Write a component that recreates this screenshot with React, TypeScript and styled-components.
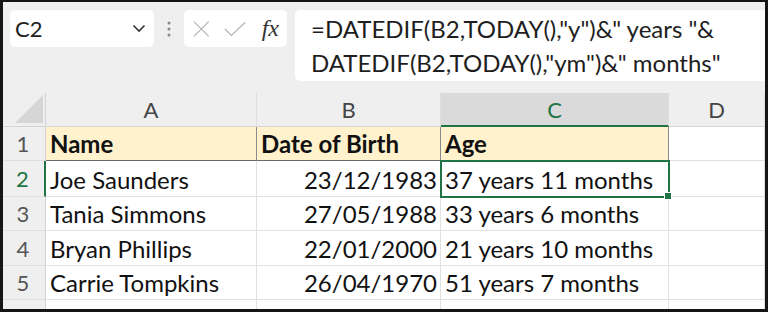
import React from "react";
import styled, { createGlobalStyle, css } from "styled-components";

const GREEN = "#217346";

const GlobalStyle = createGlobalStyle`
  html, body {
    margin: 0;
    padding: 0;
    background: #ffffff;
  }
  * {
    box-sizing: border-box;
  }
`;

const Frame = styled.div`
  width: 768px;
  height: 312px;
  border: 3px solid #151515;
  border-top-width: 2px;
  overflow: hidden;
  background: #efefef;
  font-family: Lato, "Liberation Sans", sans-serif;
  display: flex;
  flex-direction: column;
`;

const Toolbar = styled.div`
  display: flex;
  align-items: flex-start;
  height: 91px;
  padding: 8px 0 0 7px;
  flex-shrink: 0;
`;

const Box = styled.div`
  background: #ffffff;
  border-radius: 5px;
  height: 37px;
  display: flex;
  align-items: center;
`;

const NameBox = styled(Box)`
  width: 144px;
  padding: 0 8px 0 5px;
  justify-content: space-between;
  font-size: 22px;
  color: #222;
`;

const Dots = styled.div`
  width: 30px;
  height: 37px;
  display: flex;
  align-items: center;
  justify-content: center;
`;

const FxBox = styled(Box)`
  width: 103px;
  padding: 0 8px 0 9px;
  gap: 14px;
`;

const Fx = styled.span`
  font-family: "Liberation Serif", serif;
  font-style: italic;
  font-size: 24px;
  color: #333;
  margin-left: 2px;
`;

const FormulaBox = styled.div`
  flex: 1;
  margin-left: 8px;
  margin-right: -12px;
  height: 71px;
  background: #ffffff;
  border-radius: 5px;
  padding: 2px 0 0 16px;
  font-size: 24px;
  line-height: 34px;
  color: #1e1e1e;
  white-space: pre;
`;

const Grid = styled.div`
  display: grid;
  grid-template-columns: 43px 211px 184px 228px 96px;
  grid-template-rows: 34px 34px 36px 34px 35px 34px 20px;
  background: #ffffff;
`;

const ColHead = styled.div<{ $active?: boolean }>`
  display: flex;
  align-items: center;
  justify-content: center;
  background: #efefef;
  border-bottom: 1px solid #d4d4d4;
  border-right: 1px solid #dedede;
  font-size: 22px;
  color: #444;
  ${({ $active }) =>
    $active &&
    css`
      background: #dadada;
      color: ${GREEN};
      border-bottom: 2px solid ${GREEN};
    `}
`;

const Corner = styled.div`
  background: #efefef;
  border-bottom: 1px solid #d4d4d4;
  border-right: 1px solid #d4d4d4;
  display: flex;
  align-items: flex-end;
  justify-content: flex-end;
  padding: 0 2px 3px 0;
`;

const RowHead = styled.div<{ $active?: boolean }>`
  display: flex;
  align-items: center;
  justify-content: center;
  background: #efefef;
  border-bottom: 1px solid #dedede;
  border-right: 1px solid #d4d4d4;
  font-size: 22px;
  color: #555;
  padding-right: 2px;
  ${({ $active }) =>
    $active &&
    css`
      color: ${GREEN};
      border-right: 2px solid ${GREEN};
    `}
`;

const Cell = styled.div<{ $head?: boolean; $right?: boolean; $selected?: boolean }>`
  position: relative;
  display: flex;
  align-items: flex-end;
  justify-content: ${({ $right }) => ($right ? "flex-end" : "flex-start")};
  padding: 0 3px 1px 4px;
  border-right: 1px solid #e1e1e1;
  border-bottom: 1px solid #e1e1e1;
  font-size: 24px;
  line-height: 30px;
  color: #111;
  white-space: nowrap;
  ${({ $head }) =>
    $head &&
    css`
      background: #fff2cc;
      font-weight: 700;
      border-right-color: #8a8a8a;
      border-bottom-color: #6a6a6a;
    `}
  ${({ $selected }) =>
    $selected &&
    css`
      outline: 2px solid ${GREEN};
      outline-offset: -1px;
      z-index: 1;
    `}
`;

const Handle = styled.span`
  position: absolute;
  right: -4px;
  bottom: -4px;
  width: 6px;
  height: 6px;
  background: ${GREEN};
  border: 1px solid #fff;
  box-sizing: content-box;
`;

const rows = [
  { name: "Joe Saunders", dob: "23/12/1983", age: "37 years 11 months" },
  { name: "Tania Simmons", dob: "27/05/1988", age: "33 years 6 months" },
  { name: "Bryan Phillips", dob: "22/01/2000", age: "21 years 10 months" },
  { name: "Carrie Tompkins", dob: "26/04/1970", age: "51 years 7 months" },
];

export default function App() {
  return (
    <>
      <GlobalStyle />
      <Frame>
        <Toolbar>
          <NameBox>
            <span>C2</span>
            <svg width="14" height="9" viewBox="0 0 14 9">
              <path d="M1.5 1.5 L7 7 L12.5 1.5" fill="none" stroke="#333" strokeWidth="1.6" />
            </svg>
          </NameBox>
          <Dots>
            <svg width="4" height="16" viewBox="0 0 4 16">
              <circle cx="2" cy="2" r="1.5" fill="#888" />
              <circle cx="2" cy="8" r="1.5" fill="#888" />
              <circle cx="2" cy="14" r="1.5" fill="#888" />
            </svg>
          </Dots>
          <FxBox>
            <svg width="18" height="18" viewBox="0 0 18 18">
              <path d="M1 1 L17 17 M17 1 L1 17" stroke="#b4b4b4" strokeWidth="1.3" fill="none" />
            </svg>
            <svg width="24" height="16" viewBox="0 0 24 16">
              <path d="M1 8 L8 15 L23 1" stroke="#b4b4b4" strokeWidth="1.3" fill="none" />
            </svg>
            <Fx>fx</Fx>
          </FxBox>
          <FormulaBox>
            {'=DATEDIF(B2,TODAY(),"y")&" years "&\nDATEDIF(B2,TODAY(),"ym")&" months"'}
          </FormulaBox>
        </Toolbar>
        <Grid>
          <Corner>
            <svg width="28" height="28" viewBox="0 0 28 28">
              <path d="M28 0 L28 28 L0 28 Z" fill="#d6d6d6" />
            </svg>
          </Corner>
          <ColHead>A</ColHead>
          <ColHead>B</ColHead>
          <ColHead $active>C</ColHead>
          <ColHead>D</ColHead>

          <RowHead>1</RowHead>
          <Cell $head>Name</Cell>
          <Cell $head>Date of Birth</Cell>
          <Cell $head>Age</Cell>
          <Cell />

          {rows.map((r, i) => (
            <React.Fragment key={r.name}>
              <RowHead $active={i === 0}>{i + 2}</RowHead>
              <Cell>{r.name}</Cell>
              <Cell $right>{r.dob}</Cell>
              <Cell $selected={i === 0}>
                {r.age}
                {i === 0 && <Handle />}
              </Cell>
              <Cell />
            </React.Fragment>
          ))}

          <RowHead />
          <Cell />
          <Cell />
          <Cell />
          <Cell />
        </Grid>
      </Frame>
    </>
  );
}
